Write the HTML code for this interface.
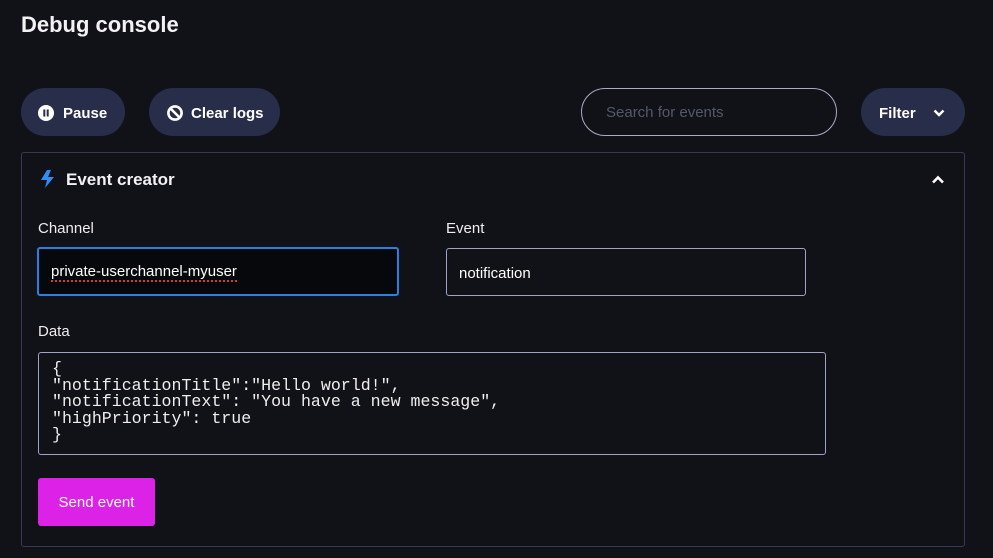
<!DOCTYPE html>
<html><head><style>
*{box-sizing:border-box;margin:0;padding:0}
body{width:993px;height:558px;background:#111218;font-family:"Liberation Sans",sans-serif;color:#fff;position:relative;overflow:hidden}
.abs{position:absolute}
h1{position:absolute;left:21px;top:12px;font-size:22px;font-weight:bold;color:#f2f2f5}
.btn{position:absolute;top:88px;height:48px;border-radius:24px;background:#282d4a;color:#fff;font-size:15px;font-weight:bold;display:flex;align-items:center;padding-top:2px}
.panel{position:absolute;left:21px;top:152px;width:944px;height:395px;border:1px solid #373a55;border-radius:3px}
.lbl{position:absolute;font-size:15px;color:#eee}
.inp{position:absolute;border:1px solid #9fa3c4;border-radius:3px;font-size:15px;color:#fff;padding-left:12px;padding-top:2px;display:flex;align-items:center}
</style></head><body>
<h1>Debug console</h1>
<div class="btn" style="left:21px;width:104px;padding-left:17px">
<svg width="16" height="16" viewBox="0 0 16 16"><circle cx="8" cy="8" r="8" fill="#fff"/><rect x="5.3" y="4.5" width="2" height="7" fill="#282d4a"/><rect x="8.7" y="4.5" width="2" height="7" fill="#282d4a"/></svg>
<span style="margin-left:9px;font-weight:600">Pause</span></div>
<div class="btn" style="left:149px;width:131px;padding-left:18px">
<svg width="16" height="16" viewBox="0 0 16 16"><circle cx="8" cy="8" r="6.6" fill="none" stroke="#fff" stroke-width="2.6"/><line x1="3.5" y1="3.5" x2="12.5" y2="12.5" stroke="#fff" stroke-width="2.6"/></svg>
<span style="margin-left:8px">Clear logs</span></div>
<div class="abs" style="left:581px;top:88px;width:256px;height:48px;border:1px solid #a8abc3;border-radius:24px;color:#55586a;font-size:15px;padding-left:24px;line-height:48px">Search for events</div>
<div class="btn" style="left:861px;width:104px;padding-left:18px">Filter
<svg style="margin-left:17px" width="12" height="8" viewBox="0 0 12 8"><path d="M1.5 1.5L6 6L10.5 1.5" fill="none" stroke="#fff" stroke-width="2.4"/></svg></div>
<div class="panel"></div>
<svg class="abs" style="left:40px;top:170px" width="16" height="18" viewBox="0 0 16 18"><path d="M7 0L1 10H7L5 18L14 7H8L11 0Z" fill="#2f8cf5"/></svg>
<div class="abs" style="left:66px;top:170px;font-size:17px;font-weight:600;color:#f2f2f5">Event creator</div>
<svg class="abs" style="left:931px;top:175px" width="14" height="9" viewBox="0 0 14 9"><path d="M2 7.5L7 2.5L12 7.5" fill="none" stroke="#fff" stroke-width="2.6"/></svg>
<div class="lbl" style="left:38px;top:220px">Channel</div>
<div class="inp" style="left:37px;top:247px;width:362px;height:49px;border:2px solid #2c7fe0;background:#07080c"><span style="border-bottom:2px dotted #d33;line-height:16px">private-userchannel-myuser</span></div>
<div class="lbl" style="left:446px;top:220px">Event</div>
<div class="inp" style="left:446px;top:248px;width:360px;height:48px">notification</div>
<div class="lbl" style="left:38px;top:323px">Data</div>
<div class="abs" style="left:38px;top:352px;width:788px;height:103px;border:1px solid #9fa3c4;border-radius:3px"></div>
<pre class="abs" style="left:52px;top:361px;font-family:'Liberation Mono',monospace;font-size:16.6px;line-height:16.5px;color:#eee">{
"notificationTitle":"Hello world!",
"notificationText": "You have a new message",
"highPriority": true
}</pre>
<div class="abs" style="left:38px;top:478px;width:117px;height:48px;background:#dc22e6;border-radius:3px;font-size:15px;text-align:center;line-height:50px">Send event</div>
</body></html>
